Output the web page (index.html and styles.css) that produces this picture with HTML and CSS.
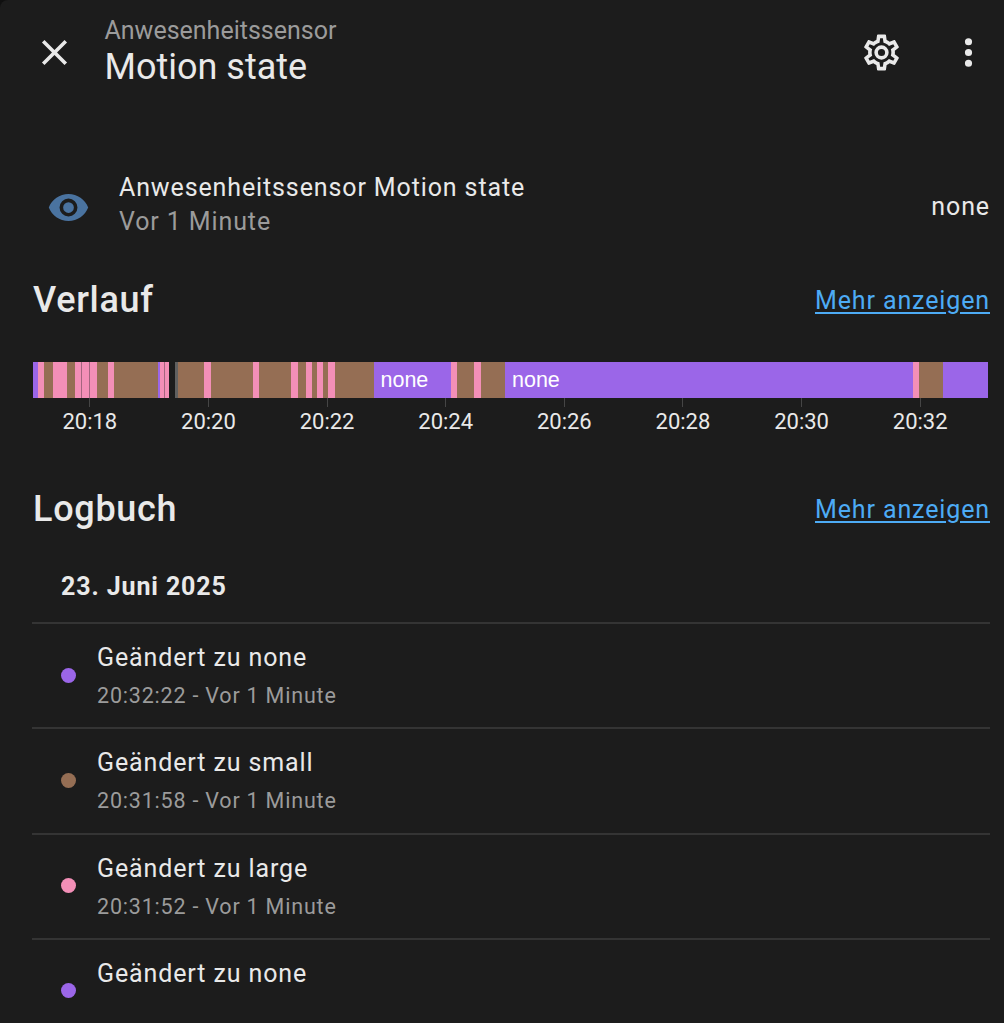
FILE: index.html
```html
<!DOCTYPE html>
<html lang="de">
<head>
<meta charset="UTF-8">
<title>Motion state</title>
<link rel="stylesheet" href="styles.css">
</head>
<body>

<div class="dialog">
  <header class="header">
    <svg class="icon" viewBox="0 0 24 24"><path d="M19,6.41L17.59,5L12,10.59L6.41,5L5,6.41L10.59,12L5,17.59L6.41,19L12,13.41L17.59,19L19,17.59L13.41,12L19,6.41Z"/></svg>
    <div class="titles">
      <p class="subtitle">Anwesenheitssensor</p>
      <h1>Motion state</h1>
    </div>
    <svg class="icon" viewBox="0 0 24 24"><path d="M12,8A4,4 0 0,1 16,12A4,4 0 0,1 12,16A4,4 0 0,1 8,12A4,4 0 0,1 12,8M12,10A2,2 0 0,0 10,12A2,2 0 0,0 12,14A2,2 0 0,0 14,12A2,2 0 0,0 12,10M10,22C9.75,22 9.54,21.82 9.5,21.58L9.13,18.93C8.5,18.68 7.96,18.34 7.44,17.94L4.95,18.95C4.73,19.03 4.46,18.95 4.34,18.73L2.34,15.27C2.21,15.05 2.27,14.78 2.46,14.63L4.57,12.97L4.5,12L4.57,11L2.46,9.37C2.27,9.22 2.21,8.95 2.34,8.73L4.34,5.27C4.46,5.05 4.73,4.96 4.95,5.05L7.44,6.05C7.96,5.66 8.5,5.32 9.13,5.07L9.5,2.42C9.54,2.18 9.75,2 10,2H14C14.25,2 14.46,2.18 14.5,2.42L14.87,5.07C15.5,5.32 16.04,5.66 16.56,6.05L19.05,5.05C19.27,4.96 19.54,5.05 19.66,5.27L21.66,8.73C21.79,8.95 21.73,9.22 21.54,9.37L19.43,11L19.5,12L19.43,13L21.54,14.63C21.73,14.78 21.79,15.05 21.66,15.27L19.66,18.73C19.54,18.95 19.27,19.04 19.05,18.95L16.56,17.95C16.04,18.34 15.5,18.68 14.87,18.93L14.5,21.58C14.46,21.82 14.25,22 14,22H10M11.25,4L10.88,6.61C9.68,6.86 8.62,7.5 7.85,8.39L5.44,7.35L4.69,8.65L6.8,10.2C6.4,11.37 6.4,12.64 6.8,13.8L4.68,15.36L5.43,16.66L7.86,15.62C8.63,16.5 9.68,17.14 10.87,17.38L11.24,20H12.76L13.13,17.39C14.32,17.14 15.37,16.5 16.14,15.62L18.57,16.66L19.32,15.36L17.2,13.81C17.6,12.64 17.6,11.37 17.2,10.2L19.31,8.65L18.56,7.35L16.15,8.39C15.38,7.5 14.32,6.86 13.12,6.62L12.75,4H11.25Z"/></svg>
    <svg class="icon menu" viewBox="0 0 24 24"><path d="M12,16A2,2 0 0,1 14,18A2,2 0 0,1 12,20A2,2 0 0,1 10,18A2,2 0 0,1 12,16M12,10A2,2 0 0,1 14,12A2,2 0 0,1 12,14A2,2 0 0,1 10,12A2,2 0 0,1 12,10M12,4A2,2 0 0,1 14,6A2,2 0 0,1 12,8A2,2 0 0,1 10,6A2,2 0 0,1 12,4Z"/></svg>
  </header>

  <div class="state">
    <svg class="icon eye" viewBox="0 0 24 24"><path d="M12,9A3,3 0 0,0 9,12A3,3 0 0,0 12,15A3,3 0 0,0 15,12A3,3 0 0,0 12,9M12,17A5,5 0 0,1 7,12A5,5 0 0,1 12,7A5,5 0 0,1 17,12A5,5 0 0,1 12,17M12,4.5C7,4.5 2.73,7.61 1,12C2.73,16.39 7,19.5 12,19.5C17,19.5 21.27,16.39 23,12C21.27,7.61 17,4.5 12,4.5Z"/></svg>
    <div class="info">
      <p>Anwesenheitssensor Motion state</p>
      <p class="muted">Vor 1 Minute</p>
    </div>
    <span>none</span>
  </div>

  <!-- Verlauf -->
  <section class="history">
    <div class="section-head">
      <h2>Verlauf</h2>
      <a href="#">Mehr anzeigen</a>
    </div>
    <div class="timeline">
      <span class="none" style="width:5px"></span>
      <span class="large" style="width:6px"></span>
      <span class="small" style="width:9px"></span>
      <span class="large" style="width:14px"></span>
      <span class="small" style="width:8px"></span>
      <span class="large edge" style="width:7px"></span>
      <span class="large edge" style="width:8px"></span>
      <span class="large" style="width:7px"></span>
      <span class="small" style="width:11px"></span>
      <span class="large" style="width:6px"></span>
      <span class="small" style="width:44px"></span>
      <span class="none" style="width:2px"></span>
      <span class="large edge" style="width:5px"></span>
      <span class="large" style="width:4px"></span>
      <span class="gap" style="width:6px"></span>
      <span class="unknown" style="width:3px"></span>
      <span class="small" style="width:26px"></span>
      <span class="large" style="width:7px"></span>
      <span class="small" style="width:42px"></span>
      <span class="large" style="width:6px"></span>
      <span class="small" style="width:32px"></span>
      <span class="large" style="width:7px"></span>
      <span class="small" style="width:8px"></span>
      <span class="large" style="width:6px"></span>
      <span class="small" style="width:5px"></span>
      <span class="large" style="width:6px"></span>
      <span class="small" style="width:5px"></span>
      <span class="large" style="width:7px"></span>
      <span class="small" style="width:38.5px"></span>
      <span class="none" style="width:77.5px">none</span>
      <span class="large" style="width:6px"></span>
      <span class="small" style="width:17px"></span>
      <span class="large" style="width:6.5px"></span>
      <span class="small" style="width:24.5px"></span>
      <span class="none" style="width:408px">none</span>
      <span class="large" style="width:6px"></span>
      <span class="small" style="width:23.5px"></span>
      <span class="none" style="width:45.5px"></span>
    </div>
    <div class="axis">
      <span>20:18</span>
      <span>20:20</span>
      <span>20:22</span>
      <span>20:24</span>
      <span>20:26</span>
      <span>20:28</span>
      <span>20:30</span>
      <span>20:32</span>
    </div>
  </section>

  <!-- Logbuch -->
  <section class="logbook">
    <div class="section-head">
      <h2>Logbuch</h2>
      <a href="#">Mehr anzeigen</a>
    </div>
    <h3>23. Juni 2025</h3>
    <ul>
      <li>
        <i class="dot none"></i>
        <div><p>Geändert zu none</p><p class="time">20:32:22 - Vor 1 Minute</p></div>
      </li>
      <li>
        <i class="dot small"></i>
        <div><p>Geändert zu small</p><p class="time">20:31:58 - Vor 1 Minute</p></div>
      </li>
      <li>
        <i class="dot large"></i>
        <div><p>Geändert zu large</p><p class="time">20:31:52 - Vor 1 Minute</p></div>
      </li>
      <li>
        <i class="dot none"></i>
        <div><p>Geändert zu none</p></div>
      </li>
    </ul>
  </section>
</div>

</body>
</html>
```
FILE: styles.css
```css
*{box-sizing:border-box;}
body{margin:0;background:#101010;font-family:Roboto,sans-serif;font-size:25px;letter-spacing:.88px;color:#e9e9e9;}
h1,h2,h3,p,ul{margin:0;padding:0;}
.dialog{height:1023px;overflow:hidden;background:#1c1c1c;border-top-left-radius:8px;}
.icon{width:43px;height:43px;fill:#e9e9e9;flex:none;}

.header{display:flex;align-items:center;height:104px;padding:0 14.5px 0 32.5px;}
.titles{flex:1;margin-left:29px;letter-spacing:0;}
.subtitle{line-height:30px;color:#9b9b9b;}
h1{font-size:36px;line-height:42px;font-weight:400;}
.menu{margin-left:43.5px;}

.state{display:flex;align-items:center;height:68px;margin-top:69px;padding:0 14px 0 47px;line-height:34px;}
.info{flex:1;margin-left:29px;padding-bottom:4px;}
.eye{fill:#4a73a0;}
.muted,.time{color:#9b9b9b;}

.section-head{display:flex;align-items:center;justify-content:space-between;height:54px;padding:0 14px 0 33px;}
h2{font-size:36px;line-height:54px;font-weight:500;letter-spacing:.7px;}
a{color:#4dabf5;text-underline-offset:3px;text-decoration-thickness:2px;}

.history{margin-top:32px;}
.timeline{display:flex;width:955px;height:36px;margin:35px 0 0 33px;font:21.5px/36px "Liberation Sans",sans-serif;letter-spacing:0;color:#fff;}
.timeline span{flex:none;}
.timeline .none{text-indent:7px;}
.none{background:#9b66e8;}
.small{background:#956e54;}
.large{background:#f38fb7;}
.unknown{background:#606060;}
.edge{border-right:1px solid #a3667f;}
.axis{display:flex;width:949px;margin-left:30.5px;font-size:22px;line-height:29px;letter-spacing:0;}
.axis span{flex:1;text-align:center;}
.axis span::before{content:"";display:block;width:1px;height:9px;margin:0 auto;background:#454545;}

.logbook{margin-top:46px;}
h3{height:86px;padding:36px 0 0 61px;font-size:25px;line-height:30px;font-weight:700;}
ul{margin:0 14px 0 32px;list-style:none;}
li{display:flex;height:105.3px;border-top:2px solid #343434;padding:16px 0 0 29px;}
li p{line-height:36px;}
li .time{font-size:21.5px;line-height:40px;letter-spacing:.8px;}
.dot{flex:none;width:15px;height:15px;margin:27.5px 21px 0 0;border-radius:50%;}
```
